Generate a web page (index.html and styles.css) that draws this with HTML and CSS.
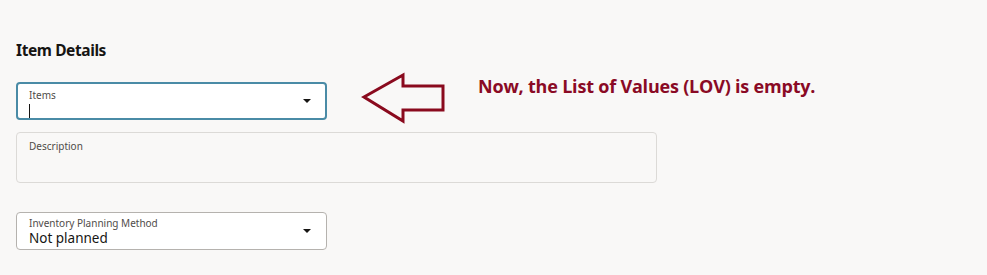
FILE: index.html
```html
<!DOCTYPE html>
<html>
<head>
<meta charset="utf-8">
<link rel="stylesheet" href="styles.css">
</head>
<body>
<div class="page">
  <h2 class="section-title">Item Details</h2>
  <div class="row-items">
    <div class="field field-focus">
      <div class="field-body">
        <span class="field-label">Items</span>
        <span class="cursor"></span>
      </div>
      <span class="caret"></span>
    </div>
    <svg class="arrow" width="90" height="54" viewBox="0 0 90 54">
      <polygon points="4,25 43,3 43,14 83,14 83,38 43,38 43,49" fill="none" stroke="#8a0a1e" stroke-width="3" stroke-linejoin="miter"/>
    </svg>
    <p class="note">Now, the List of Values (LOV) is empty.</p>
  </div>
  <div class="field field-text">
    <span class="field-label">Description</span>
  </div>
  <div class="field field-select">
    <div class="field-body">
      <span class="field-label">Inventory Planning Method</span>
      <span class="field-value">Not planned</span>
    </div>
    <span class="caret"></span>
  </div>
</div>
</body>
</html>
```
FILE: styles.css
```css
html, body {
  margin: 0;
  padding: 0;
  background: #f9f8f7;
}
body {
  width: 987px;
  height: 275px;
  overflow: hidden;
  font-family: "Noto Sans", "Open Sans", sans-serif;
  color: #161513;
}
.page {
  padding: 40px 0 0 16px;
  display: flex;
  flex-direction: column;
}
.section-title {
  margin: 0;
  font-size: 15.5px;
  font-weight: 700;
  line-height: 20px;
  color: #161513;
  letter-spacing: -0.4px;
}
.row-items {
  margin-top: 22px;
  height: 38px;
  display: flex;
  align-items: flex-start;
}
.field {
  box-sizing: border-box;
  border-radius: 4px;
  display: flex;
  align-items: center;
}
.field-body {
  display: flex;
  flex-direction: column;
  flex: 1;
}
.field-label {
  font-size: 10px;
  line-height: 12px;
  color: #4f4c49;
}
.field-focus {
  flex: none;
  width: 311px;
  height: 38px;
  background: #fff;
  border: 2px solid #4a8ba6;
  padding: 5px 14px 0 11px;
  align-items: flex-start;
}
.field-focus .caret {
  margin-top: 10px;
}
.cursor {
  display: block;
  width: 1px;
  height: 14px;
  margin-top: 3px;
  background: #161513;
}
.caret {
  width: 0;
  height: 0;
  border-left: 4px solid transparent;
  border-right: 4px solid transparent;
  border-top: 4px solid #161513;
}
.arrow {
  flex: none;
  margin: -10px 0 0 33px;
  display: block;
}
.note {
  margin: -8px 0 0 28px;
  font-family: "Open Sans", "Noto Sans", sans-serif;
  font-weight: 700;
  font-size: 18px;
  line-height: 24px;
  color: #8a0a25;
  letter-spacing: -0.2px;
  white-space: nowrap;
}
.field-text {
  margin-top: 12px;
  width: 641px;
  height: 51px;
  border: 1px solid #dcdad7;
  background: #f9f8f7;
  padding: 7px 12px 0 12px;
  align-items: flex-start;
}
.field-select {
  margin-top: 29px;
  width: 311px;
  height: 38px;
  background: #fff;
  border: 1px solid #b5b2ae;
  padding: 0 15px 0 12px;
}
.field-select .field-body {
  padding-top: 1px;
}
.field-value {
  margin-top: 1px;
  font-size: 13.5px;
  line-height: 16px;
  color: #161513;
}
```
